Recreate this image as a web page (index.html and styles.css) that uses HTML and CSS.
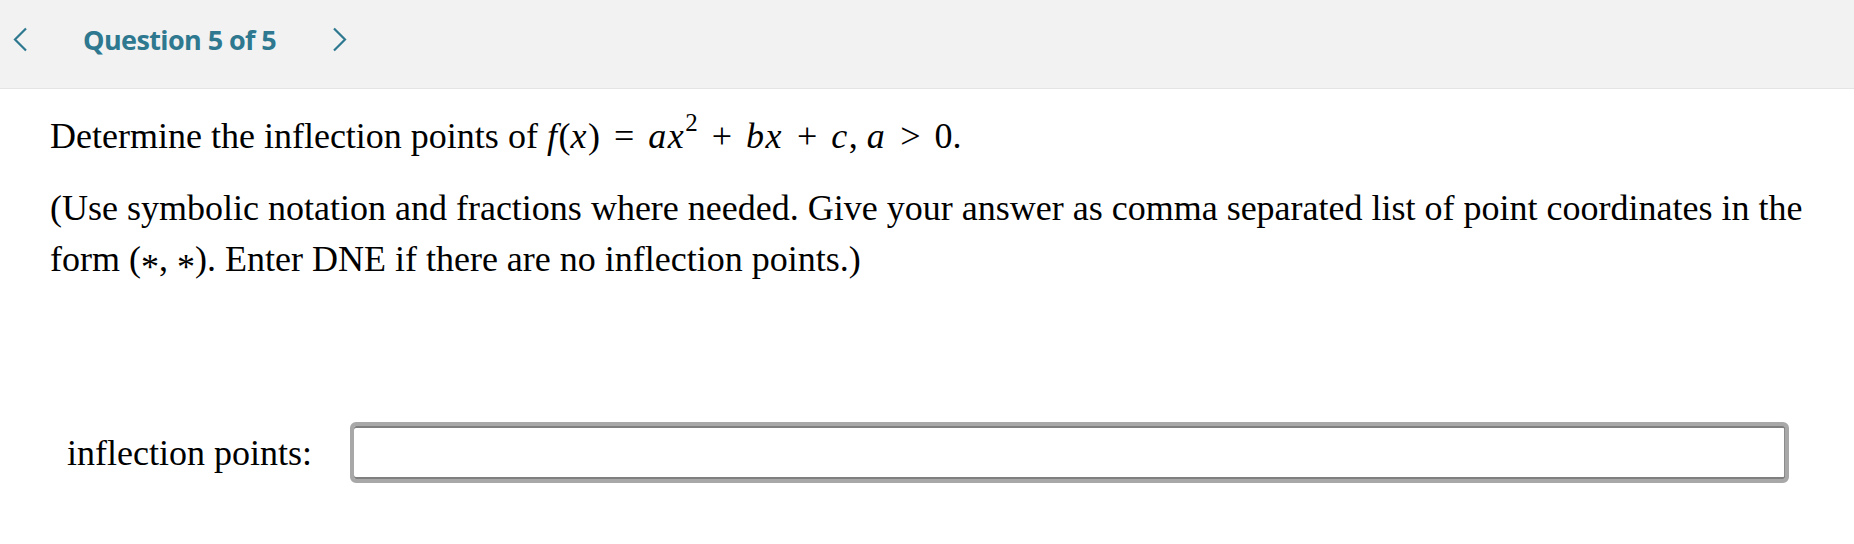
FILE: index.html
```html
<!DOCTYPE html>
<html lang="en">
<head>
  <meta charset="UTF-8" />
  <title>Question 5 of 5</title>
  <link rel="stylesheet" href="styles.css">
</head>
<body>

  <!-- Question navigation bar -->
  <header class="nav-bar">
    <button class="nav-arrow" aria-label="Previous question">
      <svg width="15" height="25" viewBox="0 0 15 25"><path d="M13 1.5 L2 12.5 L13 23.5" fill="none" stroke="#2e7890" stroke-width="2.2"/></svg>
    </button>
    <span class="nav-title">Question 5 of 5</span>
    <button class="nav-arrow" aria-label="Next question">
      <svg width="15" height="25" viewBox="0 0 15 25"><path d="M2 1.5 L13 12.5 L2 23.5" fill="none" stroke="#2e7890" stroke-width="2.2"/></svg>
    </button>
  </header>

  <!-- Question body -->
  <main class="question">
    <p class="prompt">
      Determine the inflection points of
      <span class="math"><i>f</i>(<i>x</i>)<span class="op">=</span><i>ax</i><sup>2</sup><span class="op">+</span><i>bx</i><span class="op">+</span><i>c</i>, <i>a</i><span class="op">&gt;</span>0</span>.
    </p>
    <p class="hint">
      (Use symbolic notation and fractions where needed. Give your answer as comma separated list of point coordinates in the
      form <span class="math">(<span class="ast">*</span>, <span class="ast">*</span>)</span>. Enter DNE if there are no inflection points.)
    </p>

    <div class="answer-row">
      <label for="answer">inflection points:</label>
      <input type="text" id="answer" class="answer-input">
    </div>
  </main>

</body>
</html>
```

FILE: styles.css
```css
/* General page layout and font */
body {
  margin: 0;
  padding: 0;
  background-color: #ffffff;
  font-family: "Liberation Serif", "Times New Roman", serif;
  color: #000;
}

/* Top navigation bar */
.nav-bar {
  height: 79px;
  padding-bottom: 9px;
  background-color: #f2f2f2;
  border-bottom: 1px solid #e4e4e4;
  display: flex;
  align-items: center;
  padding-left: 13px;
}

.nav-arrow {
  border: none;
  background: none;
  padding: 0;
  margin: 0;
  display: flex;
  cursor: pointer;
}

.nav-title {
  font-family: "Open Sans", sans-serif;
  font-weight: 700;
  font-size: 27px;
  color: #2e7890;
  margin: 0 56px 0 55px;
  letter-spacing: -0.6px;
}

/* Question area */
.question {
  padding: 0 50px;
}

.prompt,
.hint {
  font-size: 36px;
  line-height: 51px;
  margin: 0;
}

.prompt {
  padding-top: 22px;
}

.hint {
  padding-top: 21px;
}

.math i {
  font-style: italic;
  letter-spacing: 1.5px;
}

.math sup {
  font-size: 25px;
  line-height: 0;
  vertical-align: 17px;
}

.op {
  margin: 0 14px;
}

/* asterisks sit on the math axis, not up high */
.ast {
  position: relative;
  top: 8px;
}

/* Answer input row */
.answer-row {
  display: flex;
  align-items: center;
  margin-top: 137px;
  padding-left: 17px;
}

.answer-row label {
  font-size: 36px;
  margin-right: 38px;
}

.answer-input {
  flex: 1;
  height: 61px;
  box-sizing: border-box;
  margin-right: 15px;
  border: 4px solid #a8a8a8;
  border-radius: 6px;
  box-shadow: inset 0 2px 0 #7f7f7f, inset 0 -2px 0 #7f7f7f, inset -1px 0 0 #8c8c8c;
  outline: none;
}
```
